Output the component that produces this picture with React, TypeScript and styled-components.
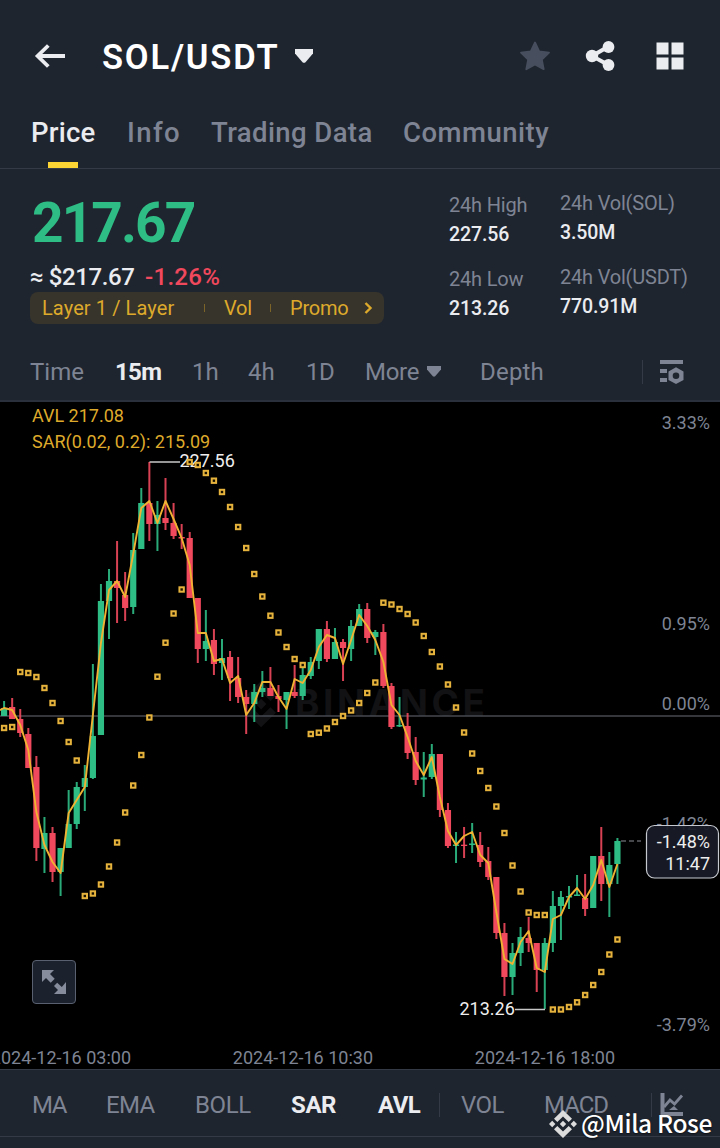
import React from "react";
import styled, { createGlobalStyle } from "styled-components";

const c = {
  bg: "#1f252f",
  text: "#eaecef",
  muted: "#7e8493",
  line: "#343b46",
  green: "#2ebd85",
  red: "#f0485c",
  gold: "#deaa2b",
};

const GlobalStyle = createGlobalStyle`
  *, *::before, *::after { box-sizing: border-box; }
  body { margin: 0; background: ${c.bg}; }
`;

const Screen = styled.main`
  position: relative;
  width: 720px;
  height: 1148px;
  overflow: hidden;
  display: flex;
  flex-direction: column;
  background: ${c.bg};
  color: ${c.text};
  font-family: Roboto, "Liberation Sans", sans-serif;
  white-space: nowrap;
`;

const Header = styled.header`
  display: flex;
  align-items: center;
  height: 97px;
  padding: 15px 34px 0 34px;
`;

const Title = styled.h1`
  margin: 2px 16px 0 35px;
  width: 177px;
  font-size: 34.5px;
  font-weight: 600;
  letter-spacing: 1.8px;
  color: #fff;
`;

const Actions = styled.div`
  display: flex;
  align-items: center;
  gap: 33px;
  margin-left: auto;
`;

const Tabs = styled.nav`
  display: flex;
  height: 72px;
  padding-left: 32px;
  border-bottom: 1px solid ${c.line};
`;

const Tab = styled.div<{ $w: number; $active?: boolean; $ls: number }>`
  position: relative;
  left: -1px;
  width: ${(p) => p.$w}px;
  line-height: 71px;
  font-size: 27.5px;
  font-weight: 500;
  letter-spacing: ${(p) => p.$ls}px;
  color: ${(p) => (p.$active ? c.text : c.muted)};
`;

const Underline = styled.span`
  position: absolute;
  left: 17px;
  bottom: 0;
  width: 30px;
  height: 6px;
  background: #fcd535;
`;

const Summary = styled.section`
  display: flex;
  height: 175px;
  padding: 22px 0 0 30px;
`;

const PriceBlock = styled.div`
  width: 419px;
`;

const Price = styled.div`
  height: 64px;
  line-height: 64px;
  padding-left: 2px;
  font-size: 55px;
  font-weight: 700;
  letter-spacing: -1.9px;
  color: ${c.green};
`;

const Converted = styled.div`
  display: flex;
  height: 37px;
  padding-top: 7px;
  line-height: 31px;
  font-size: 24px;
  font-weight: 500;
`;

const UsdValue = styled.span`
  width: 115px;
  letter-spacing: -0.4px;
`;

const Change = styled.span`
  color: ${c.red};
  letter-spacing: 0.3px;
`;

const TagPill = styled.div`
  display: flex;
  align-items: center;
  width: 354px;
  height: 32px;
  padding-left: 12px;
  border-radius: 8px;
  background: #37342c;
  color: ${c.gold};
  font-size: 20px;
`;

const PillItem = styled.span<{ $w: number; $ls?: number }>`
  width: ${(p) => p.$w}px;
  letter-spacing: ${(p) => p.$ls ?? 0}px;
`;

const PillRule = styled.i`
  width: 1px;
  height: 8px;
  margin-right: 19px;
  background: #7c6429;
`;

const StatColumn = styled.div<{ $w: number; $shift?: number }>`
  width: ${(p) => p.$w}px;
  margin-top: ${(p) => p.$shift ?? 0}px;
`;

const Stat = styled.div`
  height: 74px;
`;

const StatLabel = styled.div`
  height: 29px;
  line-height: 29px;
  font-size: 20px;
  letter-spacing: -0.2px;
  color: ${c.muted};
`;

const StatValue = styled.div`
  height: 29px;
  line-height: 30px;
  font-size: 19.5px;
  font-weight: 500;
  letter-spacing: -0.1px;
`;

const Intervals = styled.nav`
  display: flex;
  align-items: center;
  height: 58px;
  padding: 0 0 1px 30px;
  border-bottom: 2px solid #2a313c;
`;

const Option = styled.span<{ $w: number; $active?: boolean; $ls?: number; $before?: number }>`
  width: ${(p) => p.$w}px;
  margin-left: ${(p) => p.$before ?? 0}px;
  font-size: 24px;
  font-weight: ${(p) => (p.$active ? 700 : 400)};
  letter-spacing: ${(p) => p.$ls ?? 0}px;
  color: ${(p) => (p.$active ? c.text : c.muted)};
`;

const Divider = styled.i<{ $gap: number }>`
  width: 1px;
  height: 24px;
  margin-right: ${(p) => p.$gap}px;
  background: ${c.line};
`;

const ChartArea = styled.section`
  position: relative;
  height: 667px;
  background: #000;
`;

const ChartSvg = styled.svg`
  display: block;
  font-family: Roboto, sans-serif;
  font-size: 18px;
`;

const ExpandButton = styled.button`
  position: absolute;
  left: 32px;
  top: 558px;
  width: 44px;
  height: 44px;
  padding: 0;
  border: 1px solid #596070;
  border-radius: 4px;
  background: #1c222d;
  display: flex;
  align-items: center;
  justify-content: center;
`;

const Indicators = styled.nav`
  display: flex;
  align-items: center;
  height: 68px;
  padding: 3px 0 0 32px;
  border-top: 1px solid ${c.line};
  border-bottom: 1px solid ${c.line};
`;

const Signature = styled.div`
  position: absolute;
  left: 549px;
  top: 1107px;
  display: flex;
  align-items: center;
  gap: 4px;
  height: 34px;
  color: #fff;
  font: 500 24.5px/34px "Noto Sans CJK SC", sans-serif;
  letter-spacing: -0.35px;
  text-shadow: 0 1px 2px rgba(0, 0, 0, 0.6);
`;

const SignatureName = styled.span`
  margin-top: -2px;
`;

/* up?, high, body top, body bottom, low, average, SAR */
type Candle = [number, number, number, number, number, number, number];
const candles: Candle[] = [
  [1, 701, 708, 716, 716, 708, 728],
  [0, 698, 707, 719, 719, 710, 727],
  [0, 709, 719, 733, 737, 725, 672],
  [0, 728, 734, 768, 768, 750, 673],
  [0, 756, 767, 848, 861, 812, 677],
  [1, 817, 833, 849, 873, 845, 688],
  [0, 827, 833, 872, 882, 862, 703],
  [1, 848, 848, 872, 896, 873, 721],
  [1, 790, 824, 848, 848, 813, 742],
  [1, 782, 787, 824, 829, 800, 760.5],
  [1, 765, 778, 787, 811, 787, 896],
  [1, 664, 736, 778, 779, 715, 893.5],
  [1, 584, 601, 735, 735, 643, 884.5],
  [1, 569, 581, 601, 639, 590, 866.5],
  [0, 541, 581, 588, 623, 581, 842.5],
  [0, 572, 595, 608, 621, 597, 812.5],
  [1, 533, 550, 607, 614, 554, 785.5],
  [1, 488, 503, 549, 549, 508, 755],
  [0, 462, 503, 524, 541, 501, 717.5],
  [1, 501, 515, 524, 551, 523, 676.7],
  [0, 478, 518, 523, 530, 501, 642.7],
  [0, 503, 523, 536, 539, 519, 613.5],
  [0, 524, 537, 538.5, 549, 538, 589.5],
  [0, 532, 538, 598, 598, 565, 462],
  [0, 598, 598, 649, 663, 633, 465],
  [1, 610, 641, 649, 661, 633, 473],
  [0, 629, 640, 664, 675, 661, 480.7],
  [1, 639, 658, 663, 680, 659, 492],
  [0, 651, 657, 678, 701, 683, 507],
  [0, 657, 678, 697, 703, 676, 527],
  [0, 690, 697, 704, 734, 715, 548],
  [1, 684, 692, 704, 722, 703, 574],
  [1, 671, 688, 692, 697, 682, 596.5],
  [0, 667, 688, 696, 696, 682, 615.7],
  [0, 685, 696, 699, 712, 697, 632.5],
  [1, 692, 692, 700, 729, 709, 647],
  [0, 665, 692, 696, 698, 679, 659],
  [1, 667, 675, 696, 700, 683, 665],
  [1, 657, 662, 676, 679, 670, 734],
  [1, 629, 629, 661, 669, 647, 732.7],
  [0, 621, 629, 659, 662, 635, 728.5],
  [1, 628, 642, 659, 659, 638, 722],
  [0, 639, 642, 648, 681, 664, 716],
  [1, 620, 626, 649, 661, 640, 710.5],
  [1, 604, 609, 626, 626, 615, 703],
  [0, 603, 609, 638, 643, 626, 693],
  [1, 630, 632, 637, 655, 640, 682.5],
  [0, 624, 632, 686, 688, 662, 602.7],
  [0, 683, 686, 727, 729, 705, 604.5],
  [1, 697, 725, 726.5, 727, 715, 609],
  [0, 713, 726, 753, 759, 737, 614],
  [0, 737, 752, 780, 785, 761, 622.5],
  [1, 752, 777.5, 779.5, 797, 775, 636],
  [1, 744, 754, 777, 779, 757, 652],
  [0, 754, 754, 810, 817, 797, 666.5],
  [0, 803, 810, 846, 848, 831, 684.5],
  [1, 832, 844.5, 846, 863, 845, 707.5],
  [0, 827, 844.7, 846, 858, 836, 732.5],
  [1, 823, 843.5, 845, 853, 832, 753.5],
  [0, 832, 845, 862, 867, 855, 771],
  [0, 847, 861, 877, 880, 863, 788],
  [0, 877, 877, 933, 939, 912, 806.5],
  [0, 923, 933, 977, 996, 959, 833],
  [1, 943, 953, 977, 995, 964, 865.5],
  [1, 927, 937, 953, 966, 942, 891.5],
  [0, 917, 938, 943, 952, 931, 912.5],
  [0, 943, 943, 970, 992, 968, 915],
  [1, 938, 943, 970, 1009, 972, 915],
  [1, 891, 906, 943, 952, 919, 1009.5],
  [1, 891, 897, 906, 940, 915, 1009.5],
  [1, 886, 896, 897.5, 909, 897, 1007],
  [1, 875, 894.5, 896, 896, 888, 1002.3],
  [0, 874, 898, 909, 916, 899, 995],
  [1, 856, 856, 908, 908, 885, 985],
  [0, 827, 856, 884, 901, 860, 972],
  [1, 852, 865, 884, 917, 887, 954.5],
  [1, 838, 841, 864, 884, 864, 939.5],
];

const xAt = (i: number) => 4.1 + i * 8.07;

const axis: [string, number][] = [
  ["3.33%", 429],
  ["0.95%", 630],
  ["0.00%", 710],
  ["-1.42%", 830],
  ["-3.79%", 1031],
];

function Caret({ w, h, color }: { w: number; h: number; color: string }) {
  return (
    <svg width={w} height={h} viewBox="0 0 18 14">
      <path d="M0 0h18v4.5L10.5 13.2q-1.5 1.2-3 0L0 4.5z" fill={color} />
    </svg>
  );
}

function Diamond({ size, color }: { size: number; color: string }) {
  return (
    <svg width={size} height={size} viewBox="0 0 28 28" fill={color}>
      <path d="M14 0l9 8.8-3.3 3.3L14 6.5l-5.7 5.6L5 8.8zM14 28l9-8.8-3.3-3.3-5.7 5.6-5.7-5.6L5 19.2zM14 10.8l3.2 3.2-3.2 3.2-3.2-3.2zM3.2 10.8L6.4 14l-3.2 3.2L0 14zM24.8 10.8L28 14l-3.2 3.2-3.2-3.2z" />
    </svg>
  );
}

function Chart() {
  return (
    <ChartSvg width="720" height="667" viewBox="0 402 720 667">
      <g fill="#121214">
        <g transform="translate(238 681) scale(1.65)">
          <path d="M14 0l9 8.8-3.3 3.3L14 6.5l-5.7 5.6L5 8.8zM14 28l9-8.8-3.3-3.3-5.7 5.6-5.7-5.6L5 19.2zM14 10.8l3.2 3.2-3.2 3.2-3.2-3.2z" />
        </g>
        <text x="295" y="716" fontSize="37" fontWeight="700" textLength="190" fontFamily="Inter, sans-serif">
          BINANCE
        </text>
      </g>
      <rect x="0" y="715.3" width="720" height="1.4" fill="#4b4e56" />
      <g fill={c.muted} textAnchor="end">
        {axis.map(([label, y]) => (
          <text key={label} x="710" y={y}>
            {label}
          </text>
        ))}
        <text x="131" y="1064">2024-12-16 03:00</text>
        <text x="373" y="1064">2024-12-16 10:30</text>
        <text x="615" y="1064">2024-12-16 18:00</text>
      </g>
      {candles.map(([up, high, top, bottom, low], i) => (
        <g key={i} fill={up ? c.green : c.red}>
          <rect x={xAt(i) - 1} y={high} width="2" height={low - high} opacity="0.9" />
          <rect x={xAt(i) - 3.1} y={top} width="6.2" height={bottom - top} />
        </g>
      ))}
      <polyline
        points={"-4,712 " + candles.map((k, i) => `${xAt(i)},${k[5]}`).join(" ")}
        fill="none"
        stroke="#f0b232"
        strokeWidth="1.9"
        strokeLinejoin="round"
      />
      <g fill={c.gold}>
        <text x="32" y="422">AVL 217.08</text>
        <text x="32" y="448">SAR(0.02, 0.2): 215.09</text>
      </g>
      <g fill="#eeeeee">
        <path d="M149.5 462H180M515 1009.5h30" stroke="#c8c8c8" strokeWidth="1.3" />
        <text x="179.5" y="467">227.56</text>
        <text x="459.5" y="1015">213.26</text>
      </g>
      {candles.map((k, i) => (
        <rect
          key={i}
          x={xAt(i) - 2.2}
          y={k[6] - 2.2}
          width="4.4"
          height="4.4"
          fill="#1a1200"
          stroke="#e6b33c"
          strokeWidth="2"
        />
      ))}
      <path d="M621 841H641" stroke="#8b8e95" strokeWidth="1.2" strokeDasharray="5 3" />
      <rect x="646.5" y="825.5" width="72" height="52.5" rx="8" fill="#181c26" fillOpacity="0.94" stroke="#c6c9cf" strokeWidth="1.2" />
      <g fill="#eeeeee" textAnchor="end">
        <text x="710" y="848">-1.48%</text>
        <text x="710" y="870">11:47</text>
      </g>
    </ChartSvg>
  );
}

export default function App() {
  return (
    <Screen>
      <GlobalStyle />
      <Header>
        <svg width="33" height="26" viewBox="0 0 33 26" fill="none" stroke={c.text} strokeWidth="3.8">
          <path d="M31 13H4M14.3 2.5L3.6 13l10.7 10.5" />
        </svg>
        <Title>SOL/USDT</Title>
        <Caret w={18} h={14} color={c.text} />
        <Actions>
          <svg width="32" height="32" viewBox="0 0 32 32">
            <path
              d="M16 2.5l4.2 9 9.8 1.2-7.2 6.8 1.9 9.7L16 24.5l-8.7 4.7 1.9-9.7L2 12.7l9.8-1.2z"
              fill="#474f5e"
              stroke="#474f5e"
              strokeWidth="1.8"
              strokeLinejoin="round"
            />
          </svg>
          <svg width="32" height="32" viewBox="0 0 32 32" fill={c.text}>
            <path d="M24.500 6.5L8 16l16.5 9" fill="none" stroke={c.text} strokeWidth="4" />
            <circle cx="24.5" cy="7" r="5.9" />
            <circle cx="8" cy="16" r="6.2" />
            <circle cx="24.5" cy="25" r="5.9" />
          </svg>
          <svg width="37" height="28" viewBox="0 0 37 28" fill={c.text}>
            <path d="M7.500 .5h12v12h-12zM22.500 .5h12v12h-12zM7.500 15.500h12v12h-12zM22.500 15.500h12v12h-12z" />
          </svg>
        </Actions>
      </Header>
      <Tabs>
        <Tab $w={96} $active $ls={0.2}>
          Price
          <Underline />
        </Tab>
        <Tab $w={84} $ls={1.4}>Info</Tab>
        <Tab $w={192} $ls={0.4}>Trading Data</Tab>
        <Tab $w={160} $ls={0.5}>Community</Tab>
      </Tabs>
      <Summary>
        <PriceBlock>
          <Price>217.67</Price>
          <Converted>
            <UsdValue>≈ $217.67</UsdValue>
            <Change>-1.26%</Change>
          </Converted>
          <TagPill>
            <PillItem $w={162} $ls={0.1}>Layer 1 / Layer</PillItem>
            <PillRule />
            <PillItem $w={46} $ls={-0.2}>Vol</PillItem>
            <PillRule />
            <PillItem $w={74} $ls={-0.2}>Promo</PillItem>
            <svg width="9" height="14" viewBox="0 0 9 14" fill="none" stroke={c.gold} strokeWidth="2.4">
              <path d="M1.5 2l5 5-5 5" />
            </svg>
          </TagPill>
        </PriceBlock>
        <StatColumn $w={111}>
          <Stat>
            <StatLabel>24h High</StatLabel>
            <StatValue>227.56</StatValue>
          </Stat>
          <Stat>
            <StatLabel>24h Low</StatLabel>
            <StatValue>213.26</StatValue>
          </Stat>
        </StatColumn>
        <StatColumn $w={150} $shift={-2}>
          <Stat>
            <StatLabel>24h Vol(SOL)</StatLabel>
            <StatValue>3.50M</StatValue>
          </Stat>
          <Stat>
            <StatLabel>24h Vol(USDT)</StatLabel>
            <StatValue>770.91M</StatValue>
          </Stat>
        </StatColumn>
      </Summary>
      <Intervals>
        <Option $w={85}>Time</Option>
        <Option $w={77} $active $ls={-0.7}>15m</Option>
        <Option $w={56}>1h</Option>
        <Option $w={58}>4h</Option>
        <Option $w={59} $ls={-0.5}>1D</Option>
        <Option $w={62} $ls={-0.3}>More</Option>
        <Caret w={14} h={11} color={c.muted} />
        <Option $before={39} $w={162} $ls={0.2}>Depth</Option>
        <Divider $gap={16} />
        <svg width="26" height="26" viewBox="0 0 26 26">
          <g fill={c.muted}>
            <path d="M1 1h23v4H1zM1 10h7v4H1zM1 19h7v4H1z" />
            <path fillRule="evenodd" d="M17 8.3l7.500 4.2v8.4L17 25.1l-7.500-4.2v-8.4zM17 13.4a3.3 3.3 0 100 6.6 3.3 3.3 0 000-6.6z" />
          </g>
        </svg>
      </Intervals>
      <ChartArea>
        <Chart />
        <ExpandButton aria-label="Full screen">
          <svg width="26" height="26" viewBox="0 0 26 26" fill="#868c9c">
            <path d="M1 1h12L9 5l4.7 4.7-4 4L5 9l-4 4zM25 25H13l4-4-4-4 3.2-3.2 4.6 4.2L25 13z" />
          </svg>
        </ExpandButton>
      </ChartArea>
      <Indicators>
        <Option $w={74} $ls={-1.3}>MA</Option>
        <Option $w={89} $ls={-0.7}>EMA</Option>
        <Option $w={96} $ls={-0.4}>BOLL</Option>
        <Option $w={87} $active $ls={-0.4}>SAR</Option>
        <Option $w={61} $active $ls={-0.5}>AVL</Option>
        <Divider $gap={21} />
        <Option $w={83} $ls={-0.6}>VOL</Option>
        <Option $w={107} $ls={-1}>MACD</Option>
        <Divider $gap={8} />
        <svg width="24" height="24" viewBox="0 0 24 24" fill="none" stroke={c.muted}>
          <path d="M2.500 0v21H23" strokeWidth="4" />
          <path d="M4 14l6-7 4.500 4L22 2.500" strokeWidth="2.8" />
          <path d="M9 17l5-4 4 4z" fill={c.muted} stroke="none" />
        </svg>
      </Indicators>
      <Signature>
        <Diamond size={28} color="#dcdcdc" />
        <SignatureName>@Mila Rose</SignatureName>
      </Signature>
    </Screen>
  );
}
